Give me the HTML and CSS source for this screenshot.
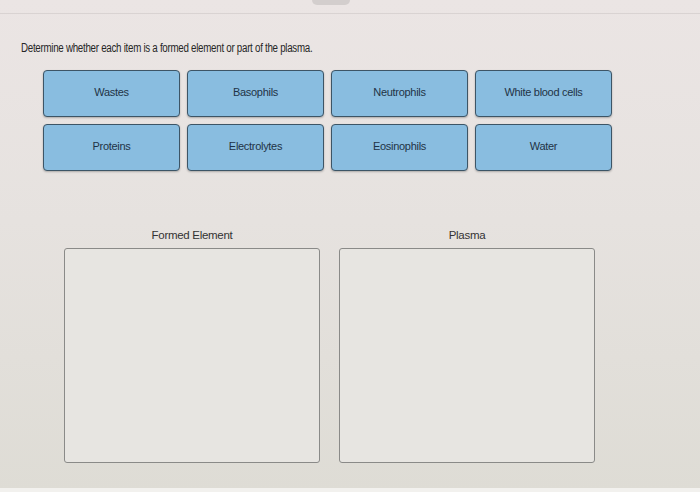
FILE: index.html
```html
<!DOCTYPE html>
<html lang="en">
<head>
  <meta charset="UTF-8" />
  <title>Formed Elements and Plasma</title>
  <link rel="stylesheet" href="styles.css">
</head>
<body>
  <div class="topbar">
    <div class="tab"></div>
  </div>

  <div class="question">
    <p class="prompt">Determine whether each item is a formed element or part of the plasma.</p>

    <!-- draggable answer tiles -->
    <div class="tiles">
      <div class="tile">Wastes</div>
      <div class="tile">Basophils</div>
      <div class="tile">Neutrophils</div>
      <div class="tile">White blood cells</div>
      <div class="tile">Proteins</div>
      <div class="tile">Electrolytes</div>
      <div class="tile">Eosinophils</div>
      <div class="tile">Water</div>
    </div>

    <!-- drop targets -->
    <div class="buckets">
      <div class="bucket">
        <div class="bucket-title">Formed Element</div>
        <div class="dropzone"></div>
      </div>
      <div class="bucket">
        <div class="bucket-title">Plasma</div>
        <div class="dropzone"></div>
      </div>
    </div>
  </div>

  <div class="bottom"></div>
</body>
</html>
```

FILE: styles.css
```css
* {
  box-sizing: border-box;
}

body {
  margin: 0;
  width: 700px;
  height: 492px;
  overflow: hidden;
  font-family: "Liberation Sans", Arial, sans-serif;
  color: #2e2e2e;
  background: linear-gradient(180deg, #ebe5e4 0%, #e6e2df 45%, #dedcd5 100%);
  position: relative;
}

.topbar {
  height: 14px;
  border-bottom: 1px solid #d9d3d2;
  display: flex;
  justify-content: center;
}

.tab {
  width: 38px;
  height: 5px;
  margin-left: -38px;
  background: #d3cecd;
  border-radius: 0 0 6px 6px;
}

.question {
  padding: 0 0 0 21px;
}

.prompt {
  margin: 27px 0 0;
  font-size: 12.5px;
  letter-spacing: -0.35px;
  color: #262626;
  white-space: nowrap;
  transform: scaleX(0.78);
  transform-origin: left center;
}

.tiles {
  display: grid;
  grid-template-columns: repeat(4, 137px);
  gap: 7px 7px;
  margin: 15px 0 0 22px;
}

.tile {
  height: 47px;
  background: #89bde0;
  border: 1px solid #3d5566;
  border-radius: 4px;
  box-shadow: 0 1px 2px rgba(0, 0, 0, 0.25);
  display: flex;
  align-items: center;
  justify-content: center;
  padding-bottom: 4px;
  font-size: 11px;
  letter-spacing: -0.3px;
  color: #1f3346;
}

.buckets {
  display: flex;
  gap: 19px;
  margin: 58px 0 0 43px;
}

.bucket {
  width: 256px;
}

.bucket-title {
  text-align: center;
  font-size: 11.5px;
  letter-spacing: -0.3px;
  color: #333;
  margin-bottom: 7px;
}

.dropzone {
  height: 215px;
  border: 1px solid #8a8a88;
  border-radius: 3px;
  background: #e7e5e1;
}

.bottom {
  position: absolute;
  left: 0;
  right: 0;
  bottom: 0;
  height: 4px;
  background: #f2f1ee;
}
```
